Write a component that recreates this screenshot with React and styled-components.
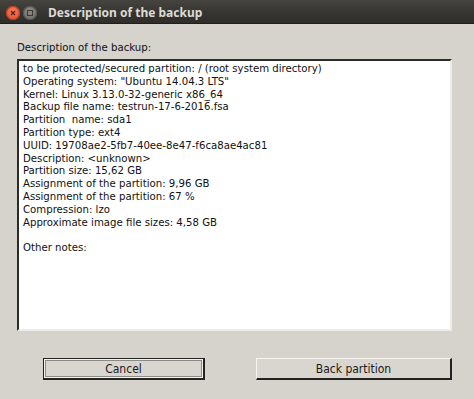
import React from 'react';
import styled, { createGlobalStyle } from 'styled-components';

const GlobalStyle = createGlobalStyle`
  html, body {
    margin: 0;
    padding: 0;
    background: #d6d3cc;
  }
  body {
    font-family: "DejaVu Sans Condensed", "DejaVu Sans", "Liberation Sans", sans-serif;
    font-stretch: condensed;
  }
`;

const Window = styled.div`
  width: 474px;
  height: 399px;
  display: flex;
  flex-direction: column;
  background: #d6d3cc;
  overflow: hidden;
`;

const TitleBar = styled.div`
  height: 23px;
  display: flex;
  align-items: center;
  padding-left: 6px;
  gap: 3px;
  background: linear-gradient(#45443f, #353430 60%, #2e2d2a);
  border-bottom: 1px solid #1f1e1c;
`;

const WinButton = styled.span`
  width: 14px;
  height: 14px;
  border-radius: 50%;
  display: flex;
  align-items: center;
  justify-content: center;
  background: ${({ close }) =>
    close ? 'radial-gradient(circle at 50% 35%, #f27a58, #df4b2a)' : 'radial-gradient(circle at 50% 35%, #8a8984, #6b6a65)'};
  box-shadow: inset 0 0 0 1px ${({ close }) => (close ? '#b83b20' : '#55544f')};
  margin-top: 2px;
`;

const Title = styled.div`
  margin-left: 8px;
  margin-top: 2px;
  font-family: "Noto Sans", "DejaVu Sans", sans-serif;
  font-stretch: normal;
  font-weight: bold;
  font-size: 12px;
  color: #dedbd3;
`;

const Body = styled.div`
  flex: 1;
  display: flex;
  flex-direction: column;
  padding: 17px 22px 0 17px;
`;

const Label = styled.div`
  font-size: 11.3px;
  color: #111;
  height: 18px;
`;

const TextArea = styled.div`
  height: 264px;
  background: #fff;
  border-top: 2px solid #2b2b2a;
  border-left: 2px solid #2b2b2a;
  border-right: 2px solid #eeece8;
  border-bottom: 2px solid #eeece8;
  padding: 2px 4px;
  font-size: 11.3px;
  line-height: 12.8px;
  color: #111;
  white-space: pre;
`;

const ButtonRow = styled.div`
  display: flex;
  justify-content: space-between;
  padding: 27px 0 0 26px;
`;

const Button = styled.div`
  height: 22px;
  width: ${({ w }) => w}px;
  box-sizing: border-box;
  display: flex;
  align-items: center;
  justify-content: center;
  font-size: 12px;
  color: #1a1a1a;
  background: #d9d6cf;
  border-top: 1px solid ${({ focus }) => (focus ? '#222' : '#f6f5f2')};
  border-left: 1px solid ${({ focus }) => (focus ? '#222' : '#f6f5f2')};
  border-right: 2px solid #222;
  border-bottom: 2px solid #222;
  box-shadow: ${({ focus }) => (focus ? 'inset 0 0 0 1px #f4f3ef, inset 0 0 0 2px #8d8b86' : 'none')};
`;

const lines = [
  'to be protected/secured partition: / (root system directory)',
  'Operating system: "Ubuntu 14.04.3 LTS"',
  'Kernel: Linux 3.13.0-32-generic x86_64',
  'Backup file name: testrun-17-6-2016.fsa',
  'Partition  name: sda1',
  'Partition type: ext4',
  'UUID: 19708ae2-5fb7-40ee-8e47-f6ca8ae4ac81',
  'Description: <unknown>',
  'Partition size: 15,62 GB',
  'Assignment of the partition: 9,96 GB',
  'Assignment of the partition: 67 %',
  'Compression: lzo',
  'Approximate image file sizes: 4,58 GB',
  '',
  'Other notes:',
];

const App = () => (
  <>
    <GlobalStyle />
    <Window>
      <TitleBar>
        <WinButton close>
          <svg width="6" height="6" viewBox="0 0 6 6">
            <path d="M1 1L5 5M5 1L1 5" stroke="#5a1a0c" strokeWidth="1.2" />
          </svg>
        </WinButton>
        <WinButton>
          <svg width="6" height="6" viewBox="0 0 6 6">
            <rect x="0.5" y="0.5" width="5" height="5" fill="none" stroke="#3a3935" strokeWidth="1" />
          </svg>
        </WinButton>
        <Title>Description of the backup</Title>
      </TitleBar>
      <Body>
        <Label>Description of the backup:</Label>
        <TextArea>{lines.join('\n')}</TextArea>
        <ButtonRow>
          <Button w={162} focus>Cancel</Button>
          <Button w={196}>Back partition</Button>
        </ButtonRow>
      </Body>
    </Window>
  </>
);

export default App;
